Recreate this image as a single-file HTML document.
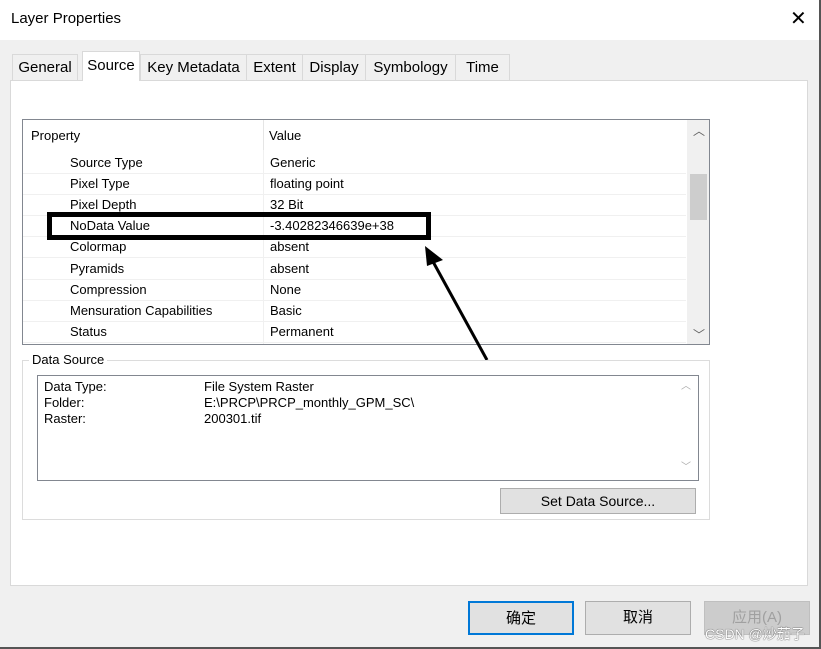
<!DOCTYPE html><html><head><style>
body{margin:0;width:821px;height:649px;overflow:hidden;background:#f0f0f0;font-family:"Liberation Sans","Noto Sans CJK SC",sans-serif;font-size:13px;color:#000;position:relative}
.a{position:absolute}
.tab{position:absolute;top:54px;height:26px;border:1px solid #d9d9d9;border-bottom:none;background:#f0f0f0;font-size:15px;line-height:26px;text-align:center;box-sizing:border-box}
.row{position:absolute;left:0;width:663px;height:21px;border-bottom:1px solid #f0f0f0;font-size:13px;line-height:21px}
.row span{position:absolute}
.btn{position:absolute;top:601px;height:34px;width:106px;border:1px solid #adadad;background:#e1e1e1;box-sizing:border-box;text-align:center;line-height:32px;font-size:15px}
</style></head><body>
<div class="a" style="left:0;top:0;width:819px;height:40px;background:#fff"></div>
<div class="a" style="left:11px;top:10px;font-size:15px">Layer Properties</div>
<div class="a" style="left:790px;top:6px;font-size:20px">✕</div>
<div class="a" style="left:819px;top:0;width:2px;height:649px;background:#555"></div>
<div class="a" style="left:0;top:647px;width:821px;height:2px;background:#555"></div>
<div class="a" style="left:10px;top:80px;width:798px;height:506px;background:#fff;border:1px solid #d9d9d9;box-sizing:border-box"></div>
<div class="tab" style="left:12px;width:66px">General</div>
<div class="tab" style="left:82px;top:51px;height:30px;width:58px;background:#fff;border-bottom:none;line-height:28px">Source</div>
<div class="tab" style="left:140px;width:107px">Key Metadata</div>
<div class="tab" style="left:246px;width:57px">Extent</div>
<div class="tab" style="left:302px;width:64px">Display</div>
<div class="tab" style="left:365px;width:91px">Symbology</div>
<div class="tab" style="left:455px;width:55px">Time</div>
<div class="a" style="left:22px;top:119px;width:688px;height:226px;border:1px solid #828790;box-sizing:border-box;background:#fff;overflow:hidden">
<div class="a" style="left:8px;top:8px">Property</div><div class="a" style="left:240px;top:0;width:1px;height:30px;background:#e5e5e5"></div>
<div class="a" style="left:246px;top:8px">Value</div>
<div class="row" style="top:32px"><span style="left:47px">Source Type</span><span style="left:247px">Generic</span></div>
<div class="row" style="top:53px"><span style="left:47px">Pixel Type</span><span style="left:247px">floating point</span></div>
<div class="row" style="top:74px"><span style="left:47px">Pixel Depth</span><span style="left:247px">32 Bit</span></div>
<div class="row" style="top:95px"><span style="left:47px">NoData Value</span><span style="left:247px">-3.40282346639e+38</span></div>
<div class="row" style="top:116px"><span style="left:47px">Colormap</span><span style="left:247px">absent</span></div>
<div class="row" style="top:138px"><span style="left:47px">Pyramids</span><span style="left:247px">absent</span></div>
<div class="row" style="top:159px"><span style="left:47px">Compression</span><span style="left:247px">None</span></div>
<div class="row" style="top:180px"><span style="left:47px">Mensuration Capabilities</span><span style="left:247px">Basic</span></div>
<div class="row" style="top:201px"><span style="left:47px">Status</span><span style="left:247px">Permanent</span></div>
<div class="a" style="left:240px;top:30px;width:1px;height:200px;background:#f0f0f0"></div>
<div class="a" style="left:664px;top:0;width:22px;height:226px;background:#f0f0f0"></div>
<div class="a" style="left:667px;top:54px;width:17px;height:46px;background:#cdcdcd"></div>
<div class="a" style="left:670px;top:2px;font-size:12px;color:#606060">︿</div>
<div class="a" style="left:670px;top:206px;font-size:12px;color:#606060">﹀</div>
</div>
<div class="a" style="left:47px;top:212px;width:384px;height:28px;border:5px solid #000;box-sizing:border-box"></div>
<svg class="a" style="left:415px;top:240px" width="80" height="125"><line x1="72" y1="120" x2="16" y2="18" stroke="#000" stroke-width="3"/><polygon points="10,6 28,20 12,26" fill="#000"/></svg>
<div class="a" style="left:22px;top:360px;width:688px;height:160px;border:1px solid #dcdcdc;box-sizing:border-box"></div>
<div class="a" style="left:29px;top:352px;background:#fff;padding:0 3px">Data Source</div>
<div class="a" style="left:37px;top:375px;width:662px;height:106px;border:1px solid #828790;box-sizing:border-box;font-size:13px;line-height:16px">
<div class="a" style="left:6px;top:3px">Data Type:<br>Folder:<br>Raster:</div>
<div class="a" style="left:166px;top:3px">File System Raster<br>E:\PRCP\PRCP_monthly_GPM_SC\<br>200301.tif</div>
<div class="a" style="left:643px;top:3px;font-size:10px;color:#aaa">︿</div>
<div class="a" style="left:643px;top:84px;font-size:10px;color:#aaa">﹀</div>
</div>
<div class="a" style="left:500px;top:488px;width:196px;height:26px;border:1px solid #adadad;background:#e1e1e1;box-sizing:border-box;text-align:center;line-height:24px;font-size:14px">Set Data Source...</div>
<div class="btn" style="left:468px;border:2px solid #0078d7">确定</div>
<div class="btn" style="left:585px">取消</div>
<div class="btn" style="left:704px;color:#a0a0a0;background:#cccccc;border-color:#bfbfbf">应用(A)</div>
<div class="a" style="left:705px;top:624px;font-size:14px;color:#fff;text-shadow:0 0 1px #555,0 0 1px #555">CSDN @炒茄子</div>
</body></html>
